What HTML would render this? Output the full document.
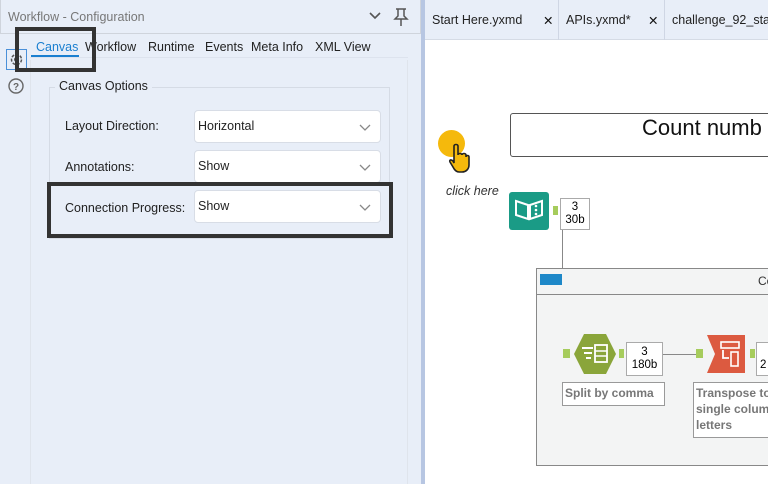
<!DOCTYPE html>
<html><head><meta charset="utf-8"><style>
*{box-sizing:border-box;margin:0;padding:0}
body{width:768px;height:484px;overflow:hidden;position:relative;background:#fff;font-family:"Liberation Sans",sans-serif;}
.abs{position:absolute}
.lbl{font-size:12.5px;color:#222}
.dd{position:absolute;left:194px;width:187px;height:33px;background:#fff;border:1px solid #d8dde6;border-radius:4px;font-size:12.5px;color:#222;padding:8px 0 0 3px}
.dd svg{position:absolute;right:9px;top:13px}
.tab{position:absolute;top:0;height:40px;font-size:12.5px;color:#222;padding-top:13px;border-right:1px solid #cfd6e4}
</style></head><body>
<div class="abs" style="left:0;top:0;width:421px;height:484px;background:#e8eef8"></div>
<div class="abs" style="left:421px;top:0;width:4px;height:484px;background:#b7c6e2"></div>
<div class="abs" style="left:0;top:0;width:421px;height:34px;border:1px solid #cfd4dc;border-top:none;background:#e8eef8"></div>
<div class="abs" style="left:8px;top:10px;font-size:12.5px;color:#777">Workflow - Configuration</div>
<svg class="abs" style="left:368px;top:11px" width="14" height="10"><path d="M2 2l5 5 5-5" stroke="#555" stroke-width="1.6" fill="none"/></svg>
<svg class="abs" style="left:392px;top:7px" width="18" height="20"><path d="M4 2h10M6 2v7l-3 3h12l-3-3V2M9 12v7" stroke="#555" stroke-width="1.5" fill="none"/></svg>
<div class="abs" style="left:36px;top:40px;font-size:12.5px;color:#1a7fd0">Canvas</div>
<div class="abs" style="left:31px;top:55px;width:48px;height:2px;background:#1a7fd0"></div>
<div class="abs lbl" style="left:85px;top:40px">Workflow</div>
<div class="abs lbl" style="left:148px;top:40px">Runtime</div>
<div class="abs lbl" style="left:205px;top:40px">Events</div>
<div class="abs lbl" style="left:251px;top:40px">Meta Info</div>
<div class="abs lbl" style="left:315px;top:40px">XML View</div>
<div class="abs" style="left:30px;top:57px;width:378px;height:1px;background:#dde3ee"></div>
<div class="abs" style="left:6px;top:49px;width:21px;height:21px;border:1px solid #4a90d9"></div>
<svg class="abs" style="left:8px;top:51px" width="17" height="17"><circle cx="8.5" cy="8.5" r="5" fill="none" stroke="#555" stroke-width="1.5" stroke-dasharray="3 1.5"/><circle cx="8.5" cy="8.5" r="2" fill="none" stroke="#555"/></svg>
<svg class="abs" style="left:7px;top:77px" width="18" height="18"><circle cx="9" cy="9" r="7" fill="none" stroke="#666" stroke-width="1.4"/><text x="9" y="13" font-size="10" text-anchor="middle" fill="#666" font-family="Liberation Sans" font-weight="bold">?</text></svg>
<div class="abs" style="left:30px;top:60px;width:378px;height:424px;border-left:1px solid #dfe4ec;border-right:1px solid #dfe4ec"></div>
<div class="abs" style="left:49px;top:87px;width:341px;height:152px;border:1px solid #d5dbe5"></div>
<div class="abs" style="left:55px;top:79px;background:#e8eef8;padding:0 4px;font-size:12.5px;color:#222">Canvas Options</div>
<div class="abs lbl" style="left:65px;top:119px">Layout Direction:</div>
<div class="abs lbl" style="left:65px;top:160px">Annotations:</div>
<div class="abs lbl" style="left:65px;top:201px">Connection Progress:</div>
<div class="dd" style="top:110px">Horizontal<svg width="12" height="8"><path d="M1 1l5 5 5-5" stroke="#888" stroke-width="1.3" fill="none"/></svg></div>
<div class="dd" style="top:150px">Show<svg width="12" height="8"><path d="M1 1l5 5 5-5" stroke="#888" stroke-width="1.3" fill="none"/></svg></div>
<div class="dd" style="top:190px">Show<svg width="12" height="8"><path d="M1 1l5 5 5-5" stroke="#888" stroke-width="1.3" fill="none"/></svg></div>
<div class="abs" style="left:15px;top:27px;width:81px;height:45px;border:4px solid #333"></div>
<div class="abs" style="left:47px;top:182px;width:346px;height:56px;border:4px solid #333"></div>
<div class="abs" style="left:425px;top:0;width:343px;height:40px;background:#e8eef8;border-bottom:1px solid #d5dbe5"></div>
<div class="tab" style="left:425px;width:134px;padding-left:7px">Start Here.yxmd<span style="position:absolute;left:118px;color:#111">✕</span></div>
<div class="tab" style="left:559px;width:106px;padding-left:7px">APIs.yxmd*<span style="position:absolute;left:89px;color:#111">✕</span></div>
<div class="tab" style="left:665px;width:110px;padding-left:7px;border:none">challenge_92_sta</div>
<div class="abs" style="left:510px;top:113px;width:270px;height:44px;border:1px solid #555;border-radius:3px"></div>
<div class="abs" style="left:642px;top:115px;font-size:22px;color:#111">Count numb</div>
<div class="abs" style="left:438px;top:130px;width:27px;height:27px;border-radius:50%;background:#f5b90c"></div>
<svg class="abs" style="left:448px;top:143px" width="24" height="34"><path d="M6 3c0-2 4-2 4 0v9c0-2 4-2 4 0c0-2 4-2 4 0v2c0-2 3-2 3 0v8c0 4-3 7-7 7h-3c-3 0-5-3-6-5l-3-5c-1-2 1-3 3-1l1 2z" fill="#f5b90c" stroke="#222" stroke-width="1.6"/></svg>
<div class="abs" style="left:446px;top:184px;font-size:12.5px;font-style:italic;color:#333">click here</div>
<div class="abs" style="left:509px;top:192px;width:40px;height:38px;background:#1a9b86;border-radius:3px"></div>
<svg class="abs" style="left:512px;top:196px" width="34" height="30"><path d="M4 5l12 4v14L4 19zM30 5l-12 4v14l12-4z" fill="none" stroke="#fff" stroke-width="2"/><circle cx="24" cy="10" r="1.3" fill="#fff"/><circle cx="24" cy="14" r="1.3" fill="#fff"/><circle cx="24" cy="18" r="1.3" fill="#fff"/></svg>
<div class="abs" style="left:553px;top:206px;width:5px;height:9px;background:#a6cc5c"></div>
<div class="abs" style="left:560px;top:198px;width:30px;height:32px;border:1px solid #aaa;background:#fff;font-size:11.5px;text-align:center;line-height:13px;padding-top:2px">3<br>30b</div>
<div class="abs" style="left:562px;top:230px;width:1px;height:124px;background:#888"></div>
<div class="abs" style="left:536px;top:268px;width:240px;height:198px;border:1px solid #888;background:#f3f4f4"></div>
<div class="abs" style="left:536px;top:294px;width:240px;height:1px;background:#888"></div>
<div class="abs" style="left:540px;top:274px;width:22px;height:11px;background:#1e88c8"></div>
<div class="abs" style="left:758px;top:274px;font-size:12px;color:#333">Co</div>
<div class="abs" style="left:563px;top:349px;width:7px;height:9px;background:#a6cc5c"></div>
<svg class="abs" style="left:573px;top:333px" width="44" height="42"><path d="M11 1h22l10 20-10 20H11L1 21z" fill="#8aa53a"/><path d="M9 15h11M11 20h8M13 25h5" stroke="#fff" stroke-width="2"/><rect x="22" y="12" width="12" height="17" fill="none" stroke="#fff" stroke-width="1.8"/><path d="M22 18h12M22 23h12" stroke="#fff" stroke-width="1.5"/></svg>
<div class="abs" style="left:619px;top:349px;width:5px;height:9px;background:#a6cc5c"></div>
<div class="abs" style="left:626px;top:342px;width:37px;height:34px;border:1px solid #aaa;background:#fff;font-size:11.5px;text-align:center;line-height:13px;padding-top:3px">3<br>180b</div>
<div class="abs" style="left:663px;top:354px;width:38px;height:1px;background:#888"></div>
<div class="abs" style="left:696px;top:349px;width:7px;height:9px;background:#a6cc5c"></div>
<svg class="abs" style="left:705px;top:334px" width="42" height="40"><path d="M2 1h38v38H2l8-19z" fill="#dc5a40"/><rect x="16" y="8" width="18" height="6" fill="none" stroke="#fff" stroke-width="1.6"/><path d="M18 16v8h6" stroke="#fff" stroke-width="1.8" fill="none"/><rect x="26" y="18" width="7" height="14" fill="none" stroke="#fff" stroke-width="1.6"/></svg>
<div class="abs" style="left:750px;top:349px;width:5px;height:9px;background:#a6cc5c"></div>
<div class="abs" style="left:756px;top:342px;width:20px;height:34px;border:1px solid #aaa;background:#fff;font-size:11.5px;padding:16px 0 0 3px">2</div>
<div class="abs" style="left:562px;top:382px;width:103px;height:24px;border:1px solid #999;background:#fff;font-size:12px;font-weight:bold;color:#777;padding:3px 0 0 2px">Split by comma</div>
<div class="abs" style="left:693px;top:382px;width:90px;height:56px;border:1px solid #999;background:#fff;font-size:12px;font-weight:bold;color:#777;padding:2px 0 0 2px;line-height:16px;white-space:nowrap;overflow:hidden">Transpose to<br>single column<br>letters</div>
</body></html>
